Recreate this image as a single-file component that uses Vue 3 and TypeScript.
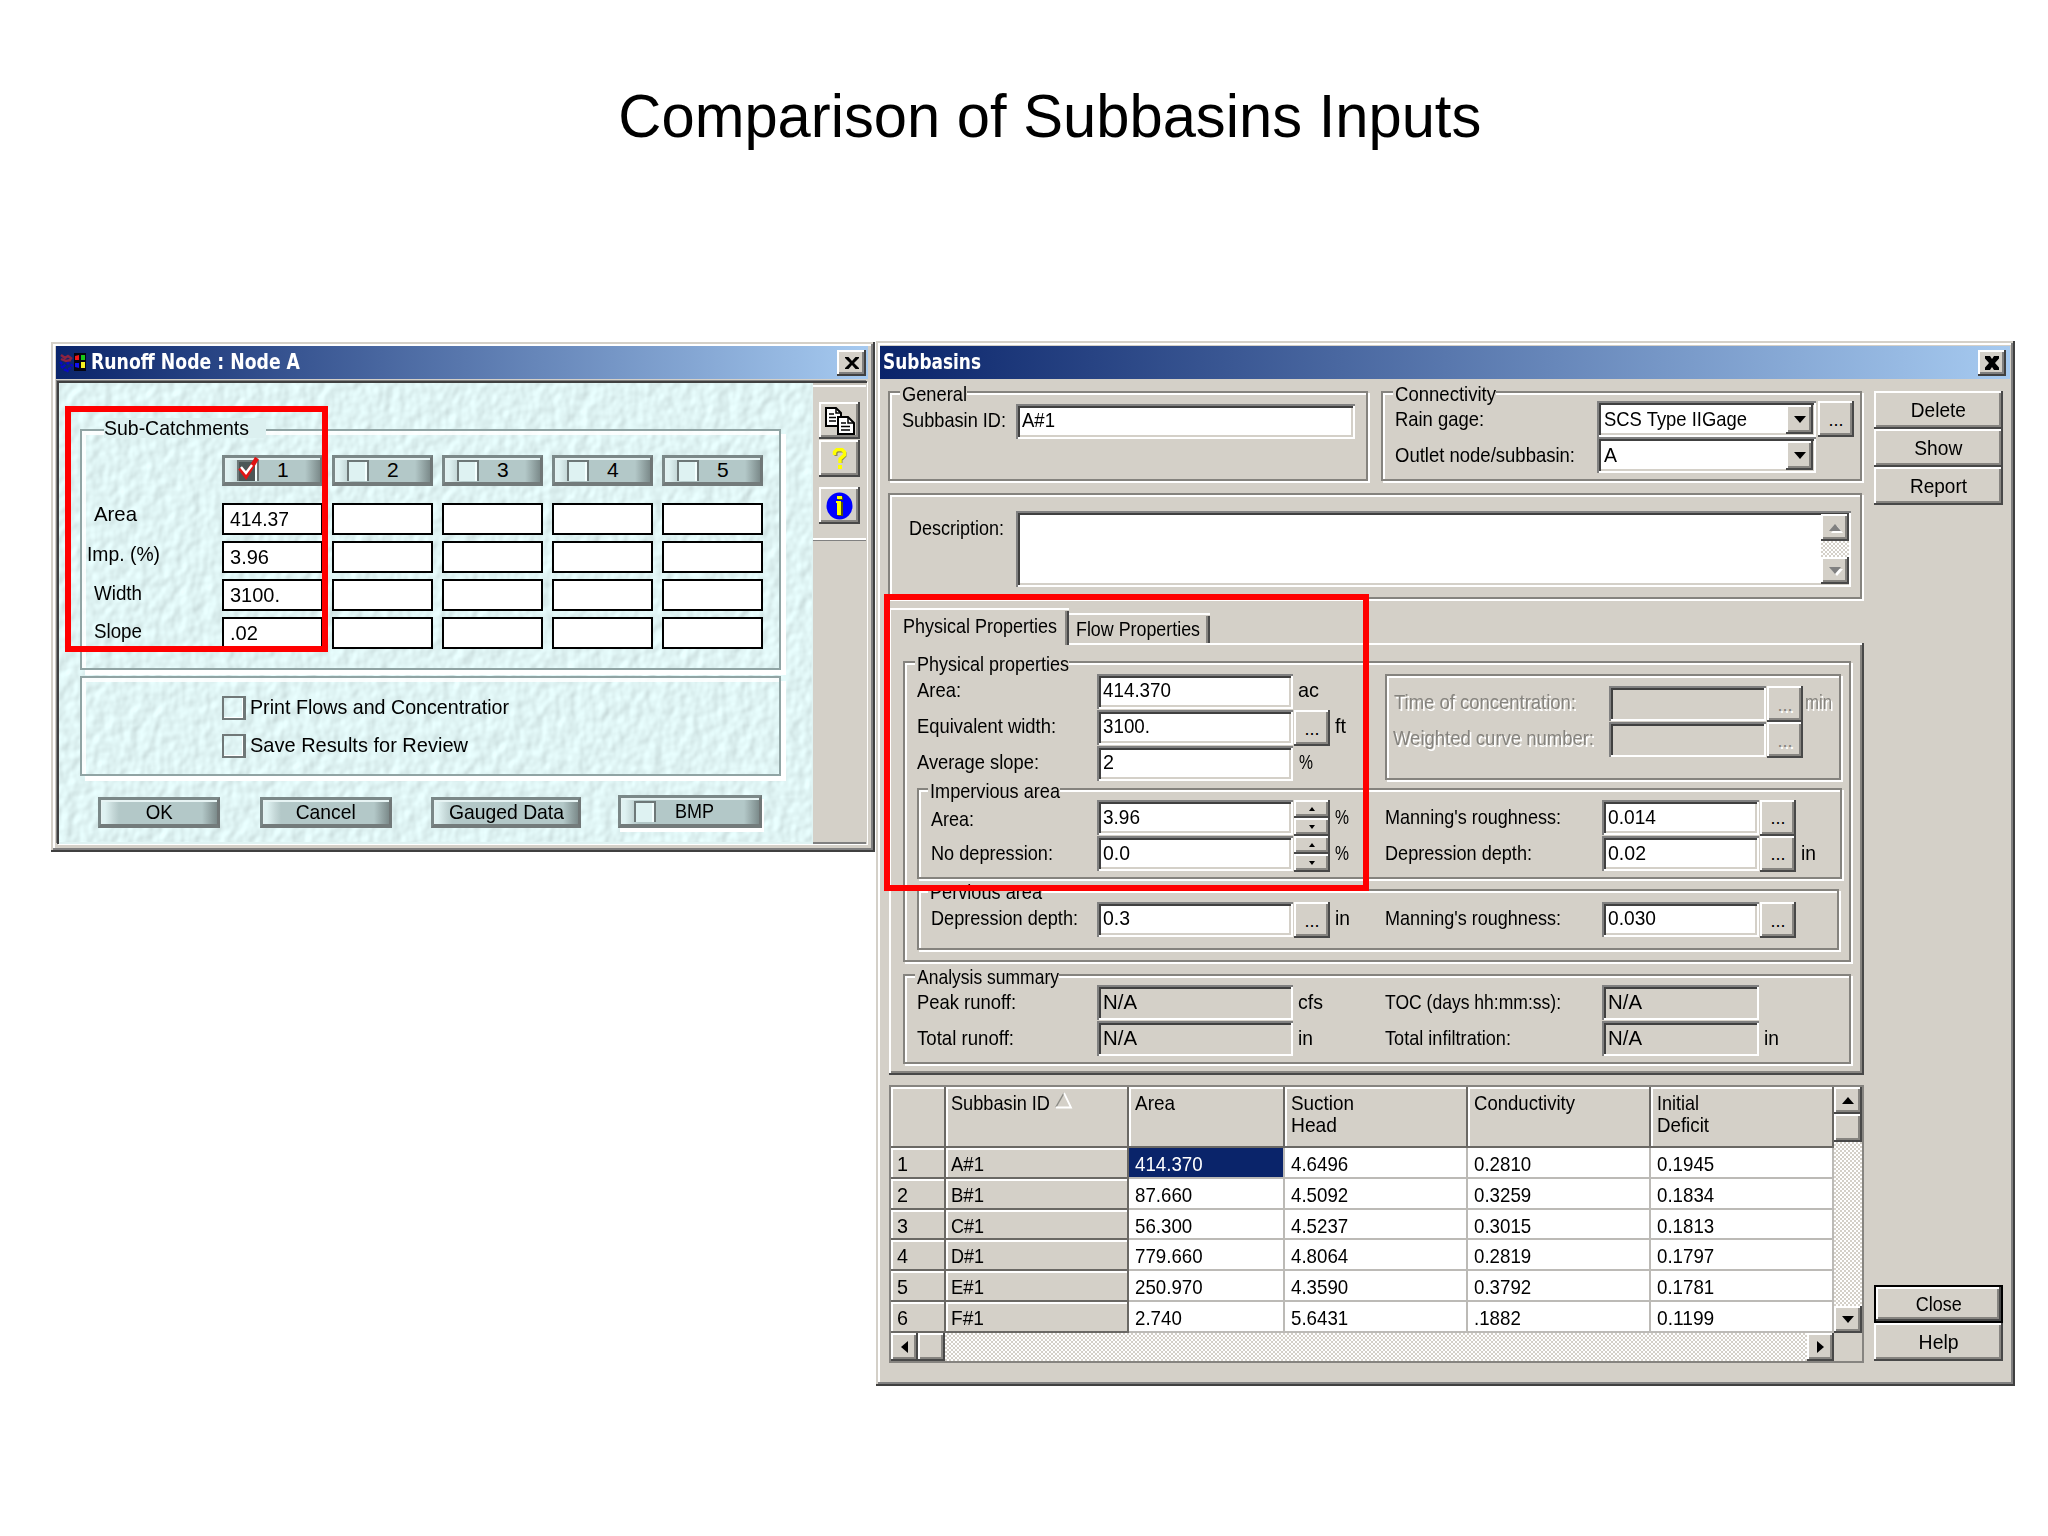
<script setup lang="ts">
// Stretches a text run horizontally to the width given in pixels.
// Left-anchored runs also take up exactly that width in the layout.
const vFit = {
  mounted(el: HTMLElement, binding: { value: number }) {
    const natural = el.getBoundingClientRect().width
    if (natural <= 0) return
    el.style.transform = `scaleX(${binding.value / natural})`
    if (!el.classList.contains('c')) el.style.marginRight = `${binding.value - natural}px`
  },
}

interface CatchRow {
  label: string
  labelWidth: number
  indent: number
  drop: number
  value: string
  valueWidth: number
}

const catchRows: CatchRow[] = [
  { label: 'Area', labelWidth: 43, indent: 14, drop: 0, value: '414.37', valueWidth: 59 },
  { label: 'Imp. (%)', labelWidth: 73, indent: 7, drop: 2, value: '3.96', valueWidth: 39 },
  { label: 'Width', labelWidth: 48, indent: 14, drop: 3, value: '3100.', valueWidth: 50 },
  { label: 'Slope', labelWidth: 48, indent: 14, drop: 3, value: '.02', valueWidth: 28 },
]

const options = [
  { text: 'Print Flows and Concentratior', width: 259 },
  { text: 'Save Results for Review', width: 218 },
]

const headers = [
  { text: 'Area', width: 40, second: '', secondWidth: 0 },
  { text: 'Suction', width: 63, second: 'Head', secondWidth: 46 },
  { text: 'Conductivity', width: 101, second: '', secondWidth: 0 },
  { text: 'Initial', width: 42, second: 'Deficit', secondWidth: 52 },
]

const rows = [
  { id: 'A#1', cells: ['414.370', '4.6496', '0.2810', '0.1945'] },
  { id: 'B#1', cells: ['87.660', '4.5092', '0.3259', '0.1834'] },
  { id: 'C#1', cells: ['56.300', '4.5237', '0.3015', '0.1813'] },
  { id: 'D#1', cells: ['779.660', '4.8064', '0.2819', '0.1797'] },
  { id: 'E#1', cells: ['250.970', '4.3590', '0.3792', '0.1781'] },
  { id: 'F#1', cells: ['2.740', '5.6431', '.1882', '0.1199'] },
]

// Digits are 10.4px wide, the decimal point half of that.
const numberWidth = (s: string) => (s.length - 1) * 10.4 + 5.2
</script>

<template>
  <main class="slide">
    <h1><span v-fit="863" class="t c">Comparison of Subbasins Inputs</span></h1>

    <section class="window runoff">
      <header class="titlebar">
        <svg class="app-icon" width="28" height="22" viewBox="0 0 28 22">
          <path d="M2 3l4 3 3-2 4 3M2 7l5 2 5-1" stroke="#8c2340" stroke-width="2.4" fill="none" />
          <path d="M1 10l4 4 4-3 5 3M2 14l4 4 6-2M7 18l3 2" stroke="#0808c8" stroke-width="2.2" fill="none" stroke-dasharray="3 1.5" />
          <path d="M15 1h12v18H15z" fill="#050510" />
          <path d="M16 4l4-1v5h-4z" fill="#f21818" />
          <path d="M22 3h4v5h-4z" fill="#18c818" />
          <path d="M16 11h4v5l-4-1z" fill="#1010f0" />
          <path d="M22 10h4v6h-4z" fill="#f4f020" />
        </svg>
        <span v-fit="209" class="t">Runoff Node : Node A</span>
        <div class="close">
          <svg width="16" height="14" viewBox="0 0 16 14"><path d="M1 1h3.500L8 5l3.500-4H15v1L10 7l5 5v1h-3.500L8 9l-3.500 4H1v-1l5-5-5-5z" /></svg>
        </div>
      </header>
      <div class="client">
        <div class="pane">
          <svg class="texture" width="753" height="459">
            <filter id="plaster" x="0" y="0" width="100%" height="100%" color-interpolation-filters="sRGB">
              <feTurbulence type="fractalNoise" baseFrequency="0.08 0.07" numOctaves="2" seed="4" />
              <feDiffuseLighting surfaceScale="0.700" diffuseConstant="1.140" lighting-color="#e2f7f7">
                <feDistantLight azimuth="215" elevation="60" />
              </feDiffuseLighting>
            </filter>
            <rect width="753" height="459" filter="url(#plaster)" />
          </svg>
          <div class="pane-body">
            <div class="etched catchments">
              <div class="catch-legend"><span v-fit="145" class="t">Sub-Catchments</span></div>
              <div class="tab-row">
                <div v-for="n in 5" :key="n" class="stone toggle">
                  <i class="tick" :class="{ on: n === 1 }">
                    <svg v-if="n === 1" width="24" height="24" viewBox="0 0 24 24">
                      <path d="M3 11l6 8L20 1" stroke="#e01414" stroke-width="4.500" fill="none" />
                      <path d="M4 10l5 6 6-8" stroke="#fff" stroke-width="2.400" fill="none" />
                    </svg>
                  </i>
                  <span class="t num">{{ n }}</span>
                </div>
              </div>
              <div v-for="r in catchRows" :key="r.label" class="catch-row">
                <div class="catch-label" :style="{ paddingLeft: r.indent + 'px', paddingTop: r.drop + 'px' }">
                  <span v-fit="r.labelWidth" class="t">{{ r.label }}</span>
                </div>
                <div class="cell"><span v-fit="r.valueWidth" class="t">{{ r.value }}</span></div>
                <div v-for="n in 4" :key="n" class="cell"></div>
              </div>
            </div>
            <div class="etched options">
              <div v-for="o in options" :key="o.text" class="option">
                <i class="box"></i><span v-fit="o.width" class="t">{{ o.text }}</span>
              </div>
            </div>
            <div class="actions">
              <div class="stone ok"><span v-fit="27" class="t c">OK</span></div>
              <div class="stone cancel"><span v-fit="60" class="t c">Cancel</span></div>
              <div class="stone gauged"><span v-fit="115" class="t c">Gauged Data</span></div>
              <div class="stone toggle bmp"><i class="tick"></i><span v-fit="39" class="t">BMP</span></div>
            </div>
          </div>
        </div>
        <aside class="tools">
          <div class="tool-strip">
            <div class="btn tool">
              <svg width="30" height="28" viewBox="0 0 30 28">
                <path d="M1 1h10l5 5v13H1z" fill="#fff" stroke="#000" stroke-width="2" />
                <path d="M11 1v5h5M4 7h5M4 10.500h7M4 14h7" stroke="#000" stroke-width="1.500" fill="none" />
                <path d="M13 10h10l6 6v11H13z" fill="#fff" stroke="#000" stroke-width="2" />
                <path d="M23 10v6h6M16 16h5M16 19.500h9M16 23h9" stroke="#000" stroke-width="1.500" fill="none" />
              </svg>
            </div>
            <div class="btn tool help">
              <svg width="16" height="22" viewBox="0 0 16 22">
                <path d="M4 8V5l2-2h5l2 2v3l-4 4v3" stroke="#8c8a50" stroke-width="3" fill="none" />
                <path d="M2.500 7V4l2.500-2.500h5l2.500 2.500v3L8 11v4" stroke="#ffff00" stroke-width="3.400" fill="none" />
                <path d="M6 17h4v4H6z" fill="#ffff00" />
              </svg>
            </div>
            <div class="btn tool info">
              <svg width="27" height="28" viewBox="0 0 27 28">
                <ellipse cx="13.500" cy="14" rx="13" ry="13.600" fill="#0000ff" />
                <path d="M12 5h5v3h-5zM12 10h5v14h-5z" fill="#55550a" />
                <path d="M11 4h5v3h-5zM10 9h5v14h-4V11h-1z" fill="#ffff00" />
              </svg>
            </div>
          </div>
        </aside>
      </div>
    </section>

    <section class="window subbasins">
      <header class="titlebar">
        <span v-fit="98" class="t">Subbasins</span>
        <div class="close">
          <svg width="16" height="14" viewBox="0 0 16 14"><path d="M1 0h5l2 3 2-3h5v2.500L11 7l4 4.500V14h-5l-2-3-2 3H1v-2.500L5 7 1 2.500z" /></svg>
        </div>
      </header>
      <div class="body">
        <div class="main">
          <div class="top">
            <div class="group general">
              <div class="legend"><span v-fit="65" class="t">General</span></div>
              <div class="row">
                <div class="lab"><span v-fit="104" class="t">Subbasin ID:</span></div>
                <div class="in"><span v-fit="33" class="t">A#1</span></div>
              </div>
            </div>
            <div class="group connectivity">
              <div class="legend"><span v-fit="101" class="t">Connectivity</span></div>
              <div class="row">
                <div class="lab"><span v-fit="89" class="t">Rain gage:</span></div>
                <div class="in"><span v-fit="143" class="t">SCS Type IIGage</span><div class="btn drop"><i class="down"></i></div></div>
                <div class="btn dots">...</div>
              </div>
              <div class="row">
                <div class="lab"><span v-fit="180" class="t">Outlet node/subbasin:</span></div>
                <div class="in"><span v-fit="13" class="t">A</span><div class="btn drop"><i class="down"></i></div></div>
              </div>
            </div>
          </div>

          <div class="group description">
            <div class="lab"><span v-fit="95" class="t">Description:</span></div>
            <div class="in area">
              <div class="scroll">
                <div class="btn"><i class="up off"></i></div>
                <div class="hatch"></div>
                <div class="btn"><i class="down off"></i></div>
              </div>
            </div>
          </div>

          <div class="tabs">
            <div class="tab active"><span v-fit="154" class="t">Physical Properties</span></div>
            <div class="tab"><span v-fit="124" class="t">Flow Properties</span></div>
          </div>

          <div class="panel">
            <div class="group physical">
              <div class="legend"><span v-fit="152" class="t">Physical properties</span></div>
              <div class="split">
                <div class="left">
                  <div class="row">
                    <div class="lab"><span v-fit="44" class="t">Area:</span></div>
                    <div class="in wide"><span v-fit="68" class="t">414.370</span></div>
                    <span v-fit="21" class="t unit">ac</span>
                  </div>
                  <div class="row">
                    <div class="lab"><span v-fit="139" class="t">Equivalent width:</span></div>
                    <div class="in wide"><span v-fit="47" class="t">3100.</span></div>
                    <div class="btn dots">...</div>
                    <span v-fit="11" class="t unit">ft</span>
                  </div>
                  <div class="row">
                    <div class="lab"><span v-fit="122" class="t">Average slope:</span></div>
                    <div class="in wide"><span v-fit="11" class="t">2</span></div>
                    <span v-fit="14" class="t unit pc">%</span>
                  </div>
                </div>
                <div class="group time">
                  <div class="row">
                    <div class="lab"><span v-fit="182" class="t dim">Time of concentration:</span></div>
                    <div class="in ro"></div>
                    <div class="btn dots dim">...</div>
                    <span v-fit="27" class="t unit dim">min</span>
                  </div>
                  <div class="row">
                    <div class="lab weighted"><span v-fit="201" class="t dim">Weighted curve number:</span></div>
                    <div class="in ro"></div>
                    <div class="btn dots dim">...</div>
                  </div>
                </div>
              </div>

              <div class="group nested impervious">
                <div class="legend"><span v-fit="130" class="t">Impervious area</span></div>
                <div class="row">
                  <div class="part">
                    <div class="lab low"><span v-fit="43" class="t">Area:</span></div>
                    <div class="in wide"><span v-fit="37" class="t">3.96</span></div>
                    <div class="spin"><div class="btn"><i class="up tiny"></i></div><div class="btn"><i class="down tiny"></i></div></div>
                    <span v-fit="14" class="t unit">%</span>
                  </div>
                  <div class="lab2"><span v-fit="176" class="t">Manning's roughness:</span></div>
                  <div class="in mid"><span v-fit="48" class="t">0.014</span></div>
                  <div class="btn dots">...</div>
                </div>
                <div class="row">
                  <div class="part">
                    <div class="lab"><span v-fit="122" class="t">No depression:</span></div>
                    <div class="in wide"><span v-fit="27" class="t">0.0</span></div>
                    <div class="spin"><div class="btn"><i class="up tiny"></i></div><div class="btn"><i class="down tiny"></i></div></div>
                    <span v-fit="14" class="t unit">%</span>
                  </div>
                  <div class="lab2"><span v-fit="147" class="t">Depression depth:</span></div>
                  <div class="in mid"><span v-fit="38" class="t">0.02</span></div>
                  <div class="btn dots">...</div>
                  <span v-fit="15" class="t unit">in</span>
                </div>
              </div>

              <div class="group nested pervious">
                <div class="legend"><span v-fit="112" class="t">Pervious area</span></div>
                <div class="row">
                  <div class="part">
                    <div class="lab"><span v-fit="147" class="t">Depression depth:</span></div>
                    <div class="in wide"><span v-fit="27" class="t">0.3</span></div>
                    <div class="btn dots">...</div>
                    <span v-fit="15" class="t unit">in</span>
                  </div>
                  <div class="lab2"><span v-fit="176" class="t">Manning's roughness:</span></div>
                  <div class="in mid"><span v-fit="48" class="t">0.030</span></div>
                  <div class="btn dots">...</div>
                </div>
              </div>
            </div>

            <div class="group analysis">
              <div class="legend"><span v-fit="142" class="t">Analysis summary</span></div>
              <div class="row">
                <div class="part">
                  <div class="lab"><span v-fit="99" class="t">Peak runoff:</span></div>
                  <div class="in wide ro"><span v-fit="34" class="t">N/A</span></div>
                  <span v-fit="25" class="t unit">cfs</span>
                </div>
                <div class="lab2"><span v-fit="176" class="t">TOC (days hh:mm:ss):</span></div>
                <div class="in mid ro"><span v-fit="34" class="t">N/A</span></div>
              </div>
              <div class="row">
                <div class="part">
                  <div class="lab"><span v-fit="97" class="t">Total runoff:</span></div>
                  <div class="in wide ro"><span v-fit="34" class="t">N/A</span></div>
                  <span v-fit="15" class="t unit">in</span>
                </div>
                <div class="lab2"><span v-fit="126" class="t">Total infiltration:</span></div>
                <div class="in mid ro"><span v-fit="34" class="t">N/A</span></div>
                <span v-fit="15" class="t unit">in</span>
              </div>
            </div>
          </div>

          <div class="sheet">
            <div class="grid-side">
              <div class="grid head">
                <div class="fixed"></div>
                <div class="fixed id">
                  <span v-fit="99" class="t">Subbasin ID</span>
                  <svg class="sort" width="18" height="17" viewBox="0 0 18 17">
                    <path d="M1 15L9 1" stroke="#8a8a84" stroke-width="1.500" />
                    <path d="M9 1l7 14.500H1" stroke="#fff" stroke-width="1.800" fill="none" />
                  </svg>
                </div>
                <div v-for="h in headers" :key="h.text" class="fixed">
                  <span v-fit="h.width" class="t">{{ h.text }}</span>
                  <span v-if="h.second" v-fit="h.secondWidth" class="t">{{ h.second }}</span>
                </div>
              </div>
              <div v-for="(r, i) in rows" :key="r.id" class="grid line">
                <div class="fixed"><span v-fit="11" class="t">{{ i + 1 }}</span></div>
                <div class="fixed id"><span v-fit="33" class="t">{{ r.id }}</span></div>
                <div v-for="(c, j) in r.cells" :key="j" class="data" :class="{ picked: i === 0 && j === 0 }">
                  <span v-fit="numberWidth(c)" class="t">{{ c }}</span>
                </div>
              </div>
              <div class="hscroll">
                <div class="btn"><i class="prev"></i></div>
                <div class="btn"></div>
                <div class="hatch"></div>
                <div class="btn"><i class="next"></i></div>
              </div>
            </div>
            <div class="vscroll">
              <div class="btn"><i class="up"></i></div>
              <div class="btn thumb"></div>
              <div class="hatch"></div>
              <div class="btn"><i class="down"></i></div>
              <div class="corner"></div>
            </div>
          </div>
        </div>

        <nav class="side">
          <div class="btn"><span v-fit="55" class="t c">Delete</span></div>
          <div class="btn"><span v-fit="48" class="t c">Show</span></div>
          <div class="btn"><span v-fit="57" class="t c">Report</span></div>
          <div class="btn default"><span v-fit="46" class="t c">Close</span></div>
          <div class="btn"><span v-fit="40" class="t c">Help</span></div>
        </nav>
      </div>
    </section>

    <div class="mark mark-left"></div>
    <div class="mark mark-right"></div>
  </main>
</template>

<style>
body {
  margin: 0;
  background: #fff;
}
</style>

<style scoped>
* {
  box-sizing: border-box;
}
.slide {
  position: relative;
  width: 2048px;
  height: 1536px;
  overflow: hidden;
  background: #fff;
  color: #000;
  font: 21px/32px 'Liberation Sans', Arial, sans-serif;
}
h1 {
  display: flex;
  justify-content: center;
  margin: 0;
  padding: 80px 0 0 51px;
  font-size: 61px;
  font-weight: 400;
  line-height: 72px;
}
.t {
  display: block;
  width: max-content;
  white-space: nowrap;
  transform-origin: 0 50%;
}
.t.c {
  transform-origin: 50% 50%;
}
.window {
  position: absolute;
  background: #d4d0c8;
  box-shadow: inset -2px -2px #404040, inset 2px 2px #d4d0c8, inset -4px -4px #808080, inset 4px 4px #fff;
}
.titlebar {
  display: flex;
  align-items: center;
  height: 33px;
  background: linear-gradient(90deg, #0a246a, #a6caf0);
  color: #fff;
  font: bold 20.5px/35px 'DejaVu Sans Condensed', 'DejaVu Sans', sans-serif;
}
.close {
  display: flex;
  align-items: center;
  justify-content: center;
  width: 28px;
  height: 26px;
  margin-left: auto;
  background: #d4d0c8;
  box-shadow: inset -2px -2px #404040, inset 2px 2px #fff, inset -4px -4px #808080;
}
.btn {
  display: flex;
  align-items: center;
  justify-content: center;
  background: #d4d0c8;
  box-shadow: inset -2px -2px #484848, inset 2px 2px #fff, inset -4px -4px #868480;
}

/* Runoff Node window */
.runoff {
  left: 51px;
  top: 342px;
  width: 824px;
  height: 510px;
  padding: 4px 7px 0 5px;
}
.app-icon {
  margin: 0 4px 0 3px;
}
.runoff .close {
  width: 29px;
  margin-right: 2px;
}
.client {
  display: flex;
  height: 463px;
  margin: 2px 1px 0 1px;
  border: solid #404040;
  border-width: 2px 0 0 2px;
  box-shadow: -1px -1px #808080, 1px 1px #fff;
}
.pane {
  position: relative;
  width: 754px;
  background: #dff3f3;
}
.texture {
  position: absolute;
  left: 0;
  top: 0;
  width: 754px;
  height: 461px;
}
.pane-body {
  position: relative;
  padding: 46px 0 0 21px;
}
.etched {
  width: 701px;
  box-shadow: inset 0 0 0 2px #90a4a4, inset 6px 6px rgba(255, 255, 255, 0.85), 5px 5px #fff;
}
.catchments {
  height: 241px;
}
.catch-legend {
  width: 162px;
  height: 20px;
  margin: 0 0 0 24px;
  line-height: 20px;
  background: #dcf0f0;
  transform: translateY(-11px);
}
.tab-row {
  display: grid;
  grid-template-columns: repeat(5, 101px);
  gap: 9px;
  height: 31px;
  margin: 6px 0 17px 142px;
}
.stone {
  display: flex;
  align-items: center;
  justify-content: center;
  height: 31px;
  background: linear-gradient(90deg, #dff2f2 4px, #c5d8d8 12px, #b3c8c8 18px, #b3c8c8 calc(100% - 15px), #7c8b8b 100%);
  border: 3px solid #7b8888;
  border-right-color: #707777;
  border-bottom: 4px solid #737b7b;
  box-shadow: inset 1px 2px #e6f3f3;
  line-height: 24px;
}
.toggle {
  justify-content: flex-start;
}
.tick {
  display: block;
  width: 22px;
  height: 21px;
  margin-left: 12px;
  background: #def2f2;
  border: solid #6d7878;
  border-width: 2px 2px 0 2px;
  box-shadow: inset -2px 0 #f4ffff;
}
.tick.on {
  background: #4c5656;
}
.tick svg {
  display: block;
  margin: -5px 0 0 -2px;
}
.num {
  margin-left: 18px;
}
.catch-row {
  display: grid;
  grid-template-columns: 142px 101px repeat(4, 110px);
  height: 32px;
  margin-bottom: 6px;
}
.catch-row .cell + .cell {
  margin-left: 9px;
  width: 101px;
}
.catch-label {
  line-height: 22px;
}
.cell {
  height: 32px;
  padding-left: 6px;
  background: #fff;
  border: 2px solid #000;
  line-height: 28px;
}
.options {
  height: 100px;
  margin-top: 6px;
  padding: 20px 0 0 142px;
}
.option {
  display: flex;
  height: 38px;
  line-height: 22px;
}
.box {
  width: 24px;
  height: 24px;
  margin-right: 4px;
  border: 2px solid #707878;
  border-right-width: 3px;
  box-shadow: inset -1px -1px #fff;
}
.actions {
  display: flex;
  margin: 21px 0 0 18px;
}
.actions .stone {
  line-height: 22px;
}
.ok {
  width: 122px;
}
.cancel {
  width: 132px;
  margin-left: 40px;
}
.gauged {
  width: 150px;
  margin-left: 39px;
}
.actions .bmp {
  width: 144px;
  height: 33px;
  margin: -2px 0 0 37px;
  box-shadow: inset 1px 2px #e6f3f3, 2px 4px #fff;
}
.bmp .t {
  margin-left: 19px;
}
.bmp .tick {
  margin-left: 13px;
}
.tools {
  width: 53px;
  background: #d4d0c8;
  border-top: 2px solid #c8c4bc;
  border-bottom: 2px solid #808080;
}
.tool-strip {
  height: 155px;
  padding: 15px 0 0 6px;
  border-top: 2px solid #fff;
  border-bottom: 2px solid #fff;
  box-shadow: 0 1px #808080;
}
.tool {
  width: 41px;
  height: 37px;
}
.tool.help {
  margin-top: 1px;
}
.tool.info {
  margin-top: 10px;
}

/* Subbasins window */
.subbasins {
  left: 876px;
  top: 341px;
  width: 1139px;
  height: 1045px;
  padding: 5px 5px 0 4px;
}
.subbasins .titlebar {
  padding: 0 4px 0 3px;
}
.body {
  display: flex;
  padding-left: 8px;
}
.main {
  width: 976px;
  padding-top: 12px;
}
.side {
  width: 129px;
  margin-left: 10px;
  padding-top: 12px;
}
.side .btn {
  height: 38px;
  line-height: 30px;
  padding-bottom: 1px;
}
.side .default {
  margin-top: 780px;
  border: 2px solid #000;
}
.group {
  box-shadow: inset 0 0 0 2px #85837e, inset 4px 4px #fff, 2px 2px #fff;
}
.legend {
  width: max-content;
  height: 20px;
  margin-left: 12px;
  margin-bottom: -7px;
  padding: 0 0 0 2px;
  line-height: 20px;
  background: #d4d0c8;
  transform: translateY(-7px);
}
.row,
.part {
  display: flex;
  height: 36px;
}
.lab {
  flex: none;
  padding-left: 14px;
}
.in {
  display: flex;
  flex: none;
  height: 35px;
  padding-left: 6px;
  background: #fff;
  box-shadow: inset 2px 2px #808080, inset -2px -2px #fff, inset 4px 4px #404040, inset -4px -4px #d4d0c8;
}
.in.ro {
  background: #d4d0c8;
  box-shadow: inset 2px 2px #808080, inset -2px -2px #fff, inset 4px 4px #404040;
}
.dots {
  flex: none;
  width: 36px;
  height: 36px;
  margin-left: 1px;
  padding-top: 1px;
  font-size: 18px;
}
.unit {
  margin-left: 5px;
}
.pc {
  margin-left: 6px;
}
.top {
  display: flex;
  gap: 13px;
  height: 90px;
}
.general {
  width: 480px;
}
.general .row {
  margin-top: -1px;
}
.general .lab {
  width: 128px;
}
.general .in {
  width: 339px;
}
.connectivity {
  width: 481px;
}
.connectivity .legend {
  margin-bottom: -10px;
}
.connectivity .lab {
  width: 216px;
  padding-top: 2px;
}
.connectivity .in {
  width: 219px;
  height: 36px;
  padding-left: 7px;
  padding-top: 2px;
}
.connectivity .dots {
  margin-left: 2px;
}
.drop {
  width: 27px;
  height: 29px;
  margin: 2px 3px 0 auto;
}
.description {
  display: flex;
  width: 974px;
  height: 106px;
  margin-top: 12px;
  padding-top: 18px;
}
.description .lab {
  width: 128px;
  padding-left: 21px;
  padding-top: 1px;
}
.area {
  width: 835px;
  height: 76px;
}
.scroll {
  display: flex;
  flex-direction: column;
  width: 28px;
  height: 70px;
  margin: 3px 2px 0 auto;
}
.scroll .btn {
  height: 27px;
}
.hatch {
  flex: 1;
  background: repeating-conic-gradient(#d4d0c8 0 25%, #fff 0 50%) 0 0 / 4px 4px;
}
.tabs {
  display: flex;
  align-items: flex-end;
  height: 37px;
  margin: 9px 0 0 1px;
}
.tab {
  height: 32px;
  width: 141px;
  padding-left: 7px;
  border-top: 2px solid #fff;
  border-bottom: 2px solid #fff;
  background: linear-gradient(90deg, #868480 50%, #484848 50%) right 0 top 1px / 4px 100% no-repeat;
  line-height: 28px;
}
.tab.active {
  position: relative;
  width: 180px;
  height: 37px;
  padding-left: 12px;
  border-left: 2px solid #fff;
  border-bottom: 0;
  background: linear-gradient(90deg, #868480 50%, #484848 50%) right 0 top 1px / 4px 34px no-repeat #d4d0c8;
  line-height: 31px;
}
.panel {
  width: 975px;
  height: 432px;
  margin: -2px 0 0 1px;
  padding: 18px 0 0 14px;
  box-shadow: inset -2px -2px #484848, inset 2px 2px #fff, inset -4px -4px #868480;
}
.physical {
  width: 948px;
  height: 301px;
}
.split {
  display: flex;
  height: 108px;
}
.left {
  width: 482px;
}
.left .lab {
  width: 194px;
}
.wide {
  width: 196px;
}
.mid {
  width: 157px;
}
.time {
  width: 456px;
  height: 106px;
  padding-top: 12px;
}
.time .lab {
  width: 224px;
  padding-left: 9px;
}
.time .weighted {
  padding-left: 8px;
}
.time .in {
  width: 157px;
}
.time .unit {
  margin-left: 2px;
}
.dim {
  color: #85837e;
  text-shadow: 2px 2px #fff;
}
.nested {
  margin-left: 14px;
}
.nested .legend {
  margin-left: 11px;
}
.nested .part {
  width: 468px;
}
.nested .lab {
  width: 180px;
}
.nested .low {
  padding-top: 2px;
}
.lab2 {
  width: 217px;
}
.impervious {
  width: 925px;
  height: 91px;
  margin-top: 6px;
}
.impervious .legend {
  margin-bottom: -8px;
}
.impervious .row {
  line-height: 33px;
}
.spin {
  width: 36px;
  height: 36px;
  margin-left: 1px;
}
.spin .btn {
  height: 18px;
}
.pervious {
  width: 922px;
  height: 61px;
  margin-top: 10px;
}
.analysis {
  width: 948px;
  height: 90px;
  margin-top: 12px;
}
.analysis .legend {
  margin-bottom: -9px;
}
.analysis .row {
  line-height: 34px;
}
.analysis .part {
  width: 482px;
}
.analysis .lab {
  width: 194px;
}

/* Arrow glyphs */
i.up,
i.down,
i.prev,
i.next {
  width: 0;
  height: 0;
  border: 6px solid transparent;
}
i.up {
  border-bottom: 7px solid #000;
  border-top: 0;
}
i.down {
  border-top: 7px solid #000;
  border-bottom: 0;
}
i.prev {
  border-right: 7px solid #000;
  border-left: 0;
}
i.next {
  border-left: 7px solid #000;
  border-right: 0;
}
i.tiny {
  border-width: 3px;
}
i.up.tiny {
  border-top-width: 0;
  border-bottom-width: 4px;
}
i.down.tiny {
  border-bottom-width: 0;
  border-top-width: 4px;
}
i.off {
  filter: drop-shadow(2px 2px #fff);
}
i.up.off {
  border-bottom-color: #808080;
}
i.down.off {
  border-top-color: #808080;
}

/* Subbasin table */
.sheet {
  display: flex;
  width: 975px;
  height: 278px;
  margin: 10px 0 0 1px;
  border: 2px solid #868480;
}
.grid-side {
  width: 943px;
}
.grid {
  display: grid;
  grid-template-columns: 55px 183px 156px 183px 183px 183px;
}
.head {
  grid-template-rows: 61px;
  line-height: 22px;
}
.line {
  grid-template-rows: 30.800px;
  line-height: 32px;
}
.fixed {
  padding-left: 6px;
  box-shadow: inset -2px -2px #6a6864, inset 2px 2px #fff;
}
.id {
  padding-left: 5px;
}
.head .fixed {
  padding-top: 5px;
}
.head .id {
  display: flex;
}
.sort {
  margin-left: 5px;
}
.data {
  padding-left: 6px;
  background: #fff;
  border: solid #bcbab6;
  border-width: 0 2px 2px 0;
}
.picked {
  background: #0a246a;
  color: #fff;
}
.hscroll {
  display: flex;
  height: 28px;
}
.hscroll .btn {
  width: 27px;
}
.vscroll {
  display: flex;
  flex-direction: column;
  width: 28px;
}
.vscroll .btn {
  height: 27px;
}
.vscroll .thumb {
  height: 28px;
}
.corner {
  height: 28px;
}

/* Highlight frames */
.mark {
  position: absolute;
  border: 6px solid #f00;
}
.mark-left {
  left: 65px;
  top: 406px;
  width: 263px;
  height: 246px;
}
.mark-right {
  left: 884px;
  top: 594px;
  width: 485px;
  height: 297px;
}
</style>
